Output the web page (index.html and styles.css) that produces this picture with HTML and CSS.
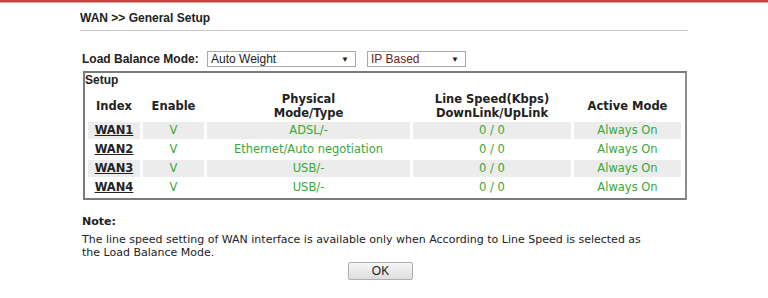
FILE: index.html
```html
<!DOCTYPE html>
<html>
<head>
<meta charset="utf-8">
<link rel="stylesheet" href="styles.css">
</head>
<body>
<div class="topbar"></div>
<div class="page">
  <div class="title">WAN &gt;&gt; General Setup</div>
  <div class="rule"></div>
  <div class="form">
    <div class="lbrow">
      <span class="lblabel">Load Balance Mode:</span>
      <div class="sel sel-wide"><span>Auto Weight</span><span class="arrow">▼</span></div>
      <div class="sel sel-narrow red"><span>IP Based</span><span class="arrow">▼</span></div>
    </div>
    <div class="box">
      <div class="setup">Setup</div>
      <table class="grid">
        <thead>
          <tr>
            <th class="c-idx">Index</th>
            <th class="c-en">Enable</th>
            <th class="c-phy">Physical<br>Mode/Type</th>
            <th class="c-spd">Line Speed(Kbps)<br>DownLink/UpLink</th>
            <th class="c-act">Active Mode</th>
          </tr>
        </thead>
        <tbody>
          <tr class="odd"><td><a class="wan">WAN1</a></td><td class="g">V</td><td class="g">ADSL/-</td><td class="g">0 / 0</td><td class="g">Always On</td></tr>
          <tr><td><a class="wan">WAN2</a></td><td class="g">V</td><td class="g">Ethernet/Auto negotiation</td><td class="g">0 / 0</td><td class="g">Always On</td></tr>
          <tr class="odd"><td><a class="wan">WAN3</a></td><td class="g">V</td><td class="g">USB/-</td><td class="g">0 / 0</td><td class="g">Always On</td></tr>
          <tr><td><a class="wan">WAN4</a></td><td class="g">V</td><td class="g">USB/-</td><td class="g">0 / 0</td><td class="g">Always On</td></tr>
        </tbody>
      </table>
    </div>
    <div class="note">
      <div class="notehead">Note:</div>
      <div class="notetext">The line speed setting of WAN interface is available only when According to Line Speed is selected as the Load Balance Mode.</div>
    </div>
    <div class="actions"><button class="ok">OK</button></div>
  </div>
</div>
</body>
</html>
```
FILE: styles.css
```css
html, body {
  margin: 0;
  padding: 0;
  background: #ffffff;
}
.topbar {
  height: 2px;
  background: #c5443f;
  border-bottom: 1px solid #e3a3a0;
}
.page {
  width: 608px;
  margin-left: 80px;
}
.title {
  font-family: "Liberation Sans", Arial, sans-serif;
  font-weight: bold;
  font-size: 12px;
  color: #222;
  line-height: 14px;
  padding-top: 8px;
  padding-bottom: 5px;
}
.rule {
  height: 1px;
  background: #c9c9c9;
}
.form {
  padding-left: 2px;
  padding-top: 20px;
}
.lbrow {
  display: flex;
  align-items: center;
  height: 16px;
  font-family: "Liberation Sans", Arial, sans-serif;
  font-size: 12px;
  color: #222;
}
.lblabel {
  font-weight: bold;
  width: 125px;
}
.sel {
  box-sizing: border-box;
  height: 16px;
  border: 1px solid #a9a9a9;
  background: #fff;
  display: flex;
  align-items: center;
  justify-content: space-between;
  padding: 0 6px 0 3px;
  font-size: 12px;
  color: #222;
}
.sel-wide { width: 149px; }
.sel-narrow { width: 99px; margin-left: 11px; }
.red { color: #6b2424; }
.arrow {
  font-size: 8px;
  color: #222;
}
.box {
  box-sizing: border-box;
  width: 604px;
  margin-left: 1px;
  margin-top: 4px;
  border: 2px solid #7b7b7b;
  border-right-color: #8d8d8d;
  padding: 0 1px 0 0;
}
.setup {
  font-family: "Liberation Sans", Arial, sans-serif;
  font-weight: bold;
  font-size: 12px;
  color: #222;
  line-height: 14px;
}
.grid {
  width: 100%;
  border-collapse: separate;
  border-spacing: 3px 2px;
  margin: 0;
  font-family: "DejaVu Sans", Verdana, sans-serif;
  font-size: 11.5px;
}
.grid th {
  font-weight: bold;
  color: #222;
  line-height: 14px;
  padding: 3px 0 0;
  text-align: center;
}
.grid td {
  height: 17px;
  padding: 0;
  text-align: center;
  line-height: 17px;
}
.c-idx { width: 52px; }
.c-en { width: 61px; }
.c-phy { width: 203px; }
.c-spd { width: 158px; }
.grid tr.odd td {
  background: #ececec;
}
.g { color: #38a838; }
.wan {
  font-weight: bold;
  color: #222;
  text-decoration: underline;
}
.note {
  margin-top: 15px;
  max-width: 580px;
  font-family: "DejaVu Sans", Verdana, sans-serif;
  font-size: 11px;
  color: #222;
  line-height: 13px;
}
.notehead {
  font-weight: bold;
  margin-bottom: 5px;
}
.actions {
  display: flex;
  justify-content: center;
  padding-top: 3px;
  padding-right: 9px;
}
.ok {
  width: 65px;
  height: 18px;
  padding: 0;
  border: 1px solid #aeaeae;
  border-radius: 2px;
  background: linear-gradient(#f6f6f6, #dedede);
  font-family: "Liberation Sans", Arial, sans-serif;
  font-size: 12px;
  color: #222;
}
```
